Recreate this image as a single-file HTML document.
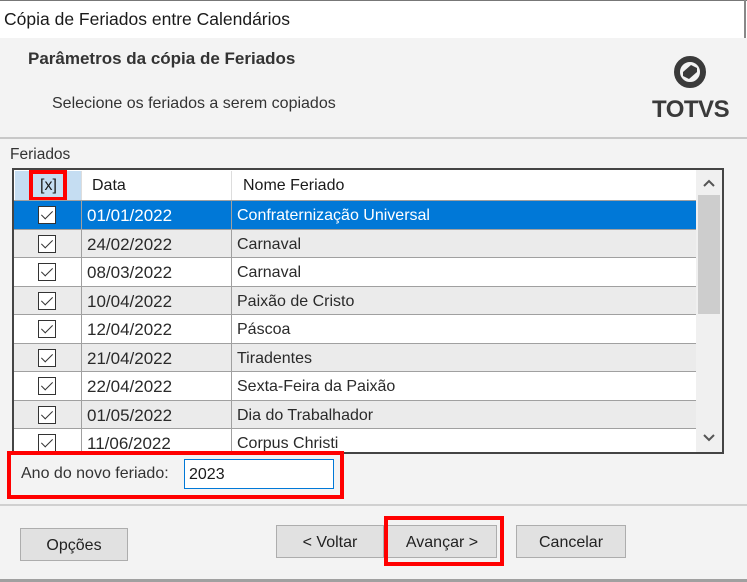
<!DOCTYPE html>
<html><head><meta charset="utf-8"><style>
*{margin:0;padding:0;box-sizing:border-box}
body{width:747px;height:582px;overflow:hidden;background:#f3f3f3;font-family:"Liberation Sans",sans-serif;position:relative;color:#222}
.a{position:absolute}
.t{font-size:14px;color:#1a1a1a;white-space:nowrap}
.row{position:absolute;left:14px;width:682px;height:28.5px;border-bottom:1px solid #a0a0a0}
.row div{position:absolute;top:0;height:100%;font-size:16px;line-height:30px;color:#2a2a2a;white-space:nowrap}
.c1{left:0;width:68px;border-right:1px solid #a0a0a0}
.c2{left:68px;width:150px;border-right:1px solid #a0a0a0;padding-left:5px;font-size:17px!important}
.c3{left:218px;padding-left:5px}
.cb{position:absolute;left:24px;top:5px;width:18px;height:18px;border:1px solid #333;background:#fff}
.cb:after{content:"";position:absolute;left:5px;top:1px;width:5px;height:10px;border:solid #333;border-width:0 1.5px 1.5px 0;transform:rotate(45deg)}
.btn{position:absolute;height:33px;background:#e1e1e1;border:1px solid #adadad;font-size:16px;text-align:center;line-height:33px;color:#222}
</style></head><body>
<div class="a" style="left:0;top:0;width:747px;height:38px;background:#fff;border-top:1px solid #777"></div>
<div class="a" style="left:744px;top:0;width:2px;height:38px;background:#888"></div>
<div class="a t" style="left:4px;top:9px;font-size:17.5px">Cópia de Feriados entre Calendários</div>
<div class="a t" style="left:28px;top:49px;font-weight:bold;font-size:17px;color:#333">Parâmetros da cópia de Feriados</div>
<div class="a t" style="left:52px;top:95px;font-size:16px;color:#333">Selecione os feriados a serem copiados</div>
<svg class="a" style="left:671px;top:55px" width="38" height="34" viewBox="0 0 38 34"><circle cx="19" cy="17" r="13" fill="none" stroke="#3a3a3a" stroke-width="6"/><path d="M12 17 L20 10 L26 13 L26 17 L18 24 L12 21Z" fill="#3a3a3a"/></svg>
<div class="a" style="left:652px;top:96px;font-size:24px;font-weight:bold;color:#3a3a3a;letter-spacing:-0.5px">TOTVS</div>
<div class="a" style="left:0;top:137px;width:747px;height:2px;background:#c8c8c8"></div>
<div class="a t" style="left:10px;top:146px;font-size:15.5px;color:#333">Feriados</div>
<div class="a" style="left:12px;top:168px;width:712px;height:286px;border:2px solid #444;background:#fff"></div>
<div class="a" style="left:15px;top:171px;width:66px;height:29px;background:#c5ddf2"></div>
<div class="a t" style="left:40px;top:177px;font-size:16px">[x]</div>
<div class="a" style="left:81px;top:171px;width:1px;height:29px;background:#ddd"></div>
<div class="a" style="left:231px;top:171px;width:1px;height:29px;background:#ddd"></div>
<div class="a t" style="left:92px;top:177px;font-size:16px">Data</div>
<div class="a t" style="left:243px;top:177px;font-size:16px">Nome Feriado</div>
<div class="a" style="left:29px;top:170px;width:38px;height:31px;border:4px solid #f00"></div>
<div class="a" style="left:14px;top:200px;width:682px;height:1px;background:#a0a0a0"></div>
<div style="position:absolute;left:0;top:0">
<div class="row" style="top:201px;background:#0078d7"><div class="c1"><span class="cb"></span></div><div class="c2" style="color:#fff">01/01/2022</div><div class="c3" style="color:#fff">Confraternização Universal</div></div>
<div class="row" style="top:229.5px;background:#ebebeb"><div class="c1"><span class="cb"></span></div><div class="c2">24/02/2022</div><div class="c3">Carnaval</div></div>
<div class="row" style="top:258px;background:#fff"><div class="c1"><span class="cb"></span></div><div class="c2">08/03/2022</div><div class="c3">Carnaval</div></div>
<div class="row" style="top:286.5px;background:#ebebeb"><div class="c1"><span class="cb"></span></div><div class="c2">10/04/2022</div><div class="c3">Paixão de Cristo</div></div>
<div class="row" style="top:315px;background:#fff"><div class="c1"><span class="cb"></span></div><div class="c2">12/04/2022</div><div class="c3">Páscoa</div></div>
<div class="row" style="top:343.5px;background:#ebebeb"><div class="c1"><span class="cb"></span></div><div class="c2">21/04/2022</div><div class="c3">Tiradentes</div></div>
<div class="row" style="top:372px;background:#fff"><div class="c1"><span class="cb"></span></div><div class="c2">22/04/2022</div><div class="c3">Sexta-Feira da Paixão</div></div>
<div class="row" style="top:400.5px;background:#ebebeb"><div class="c1"><span class="cb"></span></div><div class="c2">01/05/2022</div><div class="c3">Dia do Trabalhador</div></div>
<div class="row" style="top:429px;height:23px;background:#fff;border:none;overflow:hidden"><div class="c1"><span class="cb"></span></div><div class="c2">11/06/2022</div><div class="c3">Corpus Christi</div></div>
</div>
<div class="a" style="left:696px;top:170px;width:26px;height:282px;background:#f0f0f0"></div>
<div class="a" style="left:698px;top:195px;width:22px;height:119px;background:#cdcdcd"></div>
<svg class="a" style="left:702px;top:178px" width="14" height="10"><path d="M2 8 L7 3 L12 8" fill="none" stroke="#555" stroke-width="2"/></svg>
<svg class="a" style="left:702px;top:433px" width="14" height="10"><path d="M2 2 L7 7 L12 2" fill="none" stroke="#555" stroke-width="2"/></svg>
<div class="a" style="left:7px;top:451px;width:337px;height:48px;border:4px solid #f00"></div>
<div class="a t" style="left:21px;top:465px;font-size:16px;color:#333">Ano do novo feriado:</div>
<div class="a" style="left:184px;top:459px;width:150px;height:30px;border:1px solid #0078d7;background:#fff"></div>
<div class="a t" style="left:189px;top:466px;font-size:16px">2023</div>
<div class="a" style="left:0;top:504px;width:747px;height:2px;background:#d0d0d0"></div>
<div class="btn" style="left:20px;top:528px;width:108px">Opções</div>
<div class="btn" style="left:276px;top:525px;width:108px">&lt; Voltar</div>
<div class="btn" style="left:387px;top:525px;width:110px">Avançar &gt;</div>
<div class="a" style="left:384px;top:516px;width:120px;height:50px;border:4px solid #f00"></div>
<div class="btn" style="left:516px;top:525px;width:110px">Cancelar</div>
<div class="a" style="left:0;top:579px;width:747px;height:3px;background:#a0a0a0"></div>
</body></html>
